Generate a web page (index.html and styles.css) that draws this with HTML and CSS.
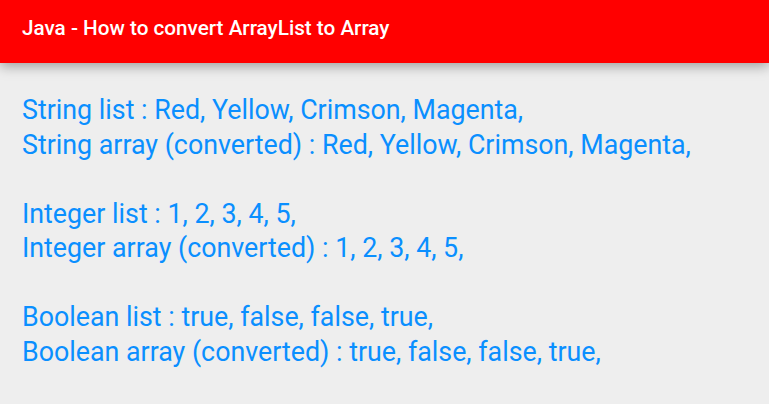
FILE: index.html
```html
<!DOCTYPE html>
<html lang="en">
<head>
    <meta charset="UTF-8">
    <meta name="viewport" content="width=device-width, initial-scale=1.0">
    <title>Java - How to convert ArrayList to Array</title>
    <link rel="stylesheet" href="styles.css">
</head>
<body>
<div class="toolbar">
    <span class="title">Java - How to convert ArrayList to Array</span>
</div>
<div class="content">
    <p class="line">String list : Red, Yellow, Crimson, Magenta,</p>
    <p class="line">String array (converted) : Red, Yellow, Crimson, Magenta,</p>
    <p class="line">&nbsp;</p>
    <p class="line">Integer list : 1, 2, 3, 4, 5,</p>
    <p class="line">Integer array (converted) : 1, 2, 3, 4, 5,</p>
    <p class="line">&nbsp;</p>
    <p class="line">Boolean list : true, false, false, true,</p>
    <p class="line">Boolean array (converted) : true, false, false, true,</p>
</div>
</body>
</html>
```

FILE: styles.css
```css
body {
    margin: 0;
    background: #eeeeee;
    font-family: Roboto, "Noto Sans", sans-serif;
    height: 404px;
    overflow: hidden;
}
.toolbar {
    height: 63px;
    background: #ff0000;
    box-shadow: 0 3px 12px rgba(0, 0, 0, 0.35);
    display: flex;
    align-items: center;
    padding-left: 22px;
    padding-bottom: 7px;
    box-sizing: border-box;
    position: relative;
}
.title {
    color: #ffffff;
    font-size: 20.7px;
    font-weight: 500;
}
.content {
    padding: 30px 22px 0;
    color: #0a8fff;
}
.line {
    margin: 0;
    font-size: 26.8px;
    line-height: 34.5px;
    white-space: nowrap;
}
```
